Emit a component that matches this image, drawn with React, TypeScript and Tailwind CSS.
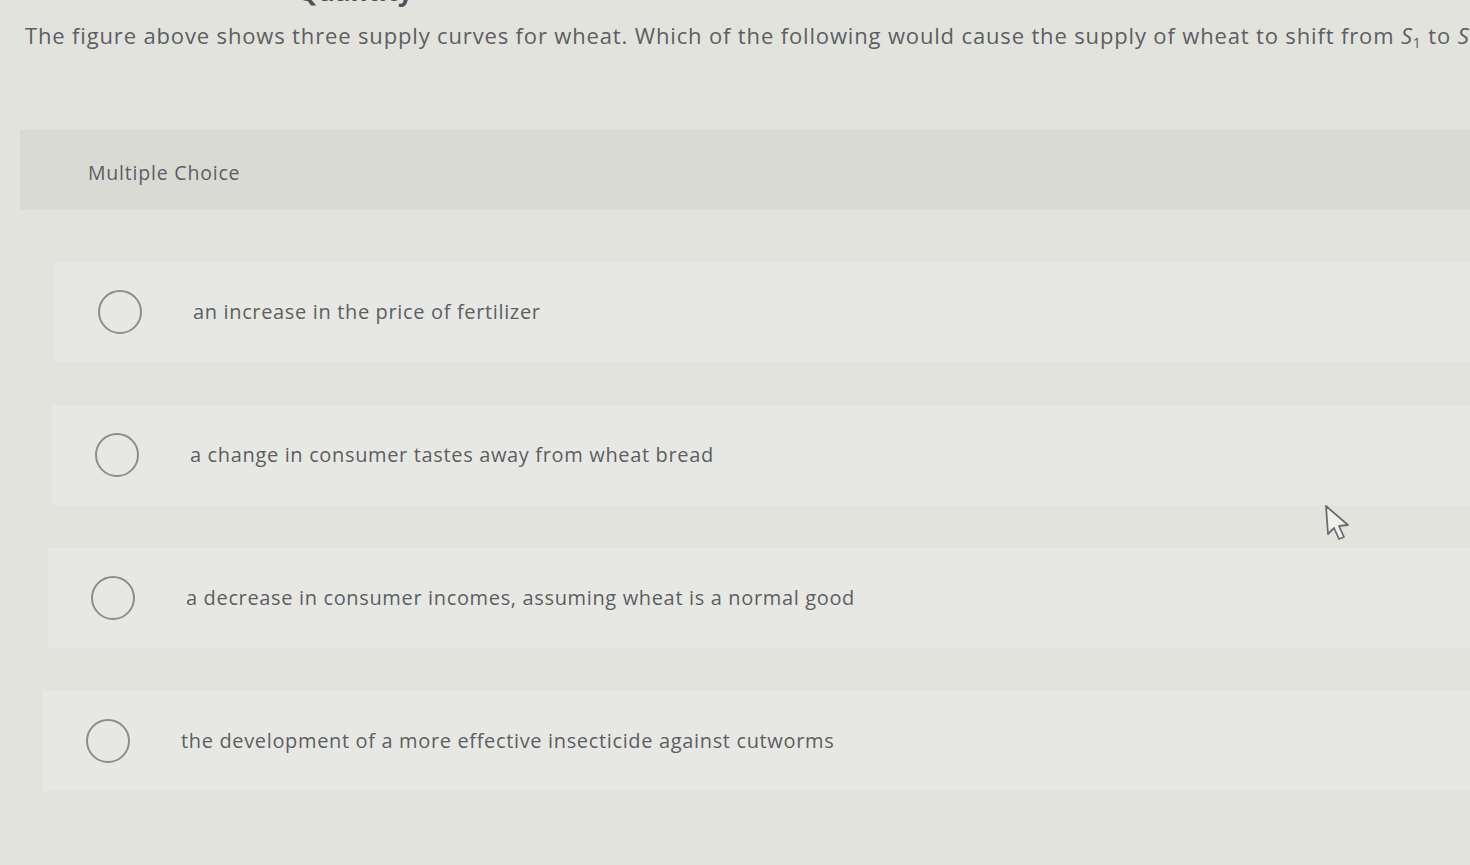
const options = [
  { text: "an increase in the price of fertilizer", indent: "ml-[55px]" },
  { text: "a change in consumer tastes away from wheat bread", indent: "ml-[52px]" },
  { text: "a decrease in consumer incomes, assuming wheat is a normal good", indent: "ml-[48px]" },
  { text: "the development of a more effective insecticide against cutworms", indent: "ml-[43px]" },
];

const Cursor = () => (
  <svg
    className="absolute left-[1322px] top-[503px]"
    width="32"
    height="42"
    viewBox="0 0 32 42"
  >
    <path
      d="M4 3 L6 31 L12 25 L17 36 L22 34 L17 23 L26 22 Z"
      fill="#eef0ec"
      stroke="#6b6d72"
      strokeWidth="1.8"
      strokeLinejoin="round"
    />
  </svg>
);

export default function App() {
  return (
    <div className="relative w-[1470px] h-[865px] overflow-hidden bg-[#e2e3dd] font-['Open_Sans',sans-serif] text-[#5d5e63]">
      {/* bottom of the figure's axis label, cut off by the screen edge */}
      <div className="h-[8px] overflow-hidden pl-[297px]">
        <div className="-mt-[24px] text-[26px] leading-[30px] font-bold text-[#4f5056]">Quantity</div>
      </div>

      <p className="mt-[12px] pl-[25px] text-[22px] leading-[30px] tracking-[0.85px] whitespace-nowrap">
        The figure above shows three supply curves for wheat. Which of the following would cause the supply of wheat to
        shift from <i>S</i>
        <sub className="text-[14px]">1</sub> to <i>S</i>
        <sub className="text-[14px]">2</sub>?
      </p>

      <div className="mt-[80px] ml-[20px] h-[80px] bg-[#d9dad4] flex items-center pl-[68px] pt-[6px]">
        <span className="text-[19.5px] tracking-[0.8px]">Multiple Choice</span>
      </div>

      <div className="flex flex-col gap-[43px] pt-[52px]">
        {options.map((o) => (
          <div key={o.text} className={`${o.indent} h-[100px] bg-[#e7e8e4] flex items-center`}>
            <span className="ml-[43px] w-[44px] h-[44px] rounded-full border-2 border-[#8b8d93] shrink-0" />
            <span className="ml-[51px] text-[20px] tracking-[0.65px]">{o.text}</span>
          </div>
        ))}
      </div>

      <Cursor />
    </div>
  );
}
